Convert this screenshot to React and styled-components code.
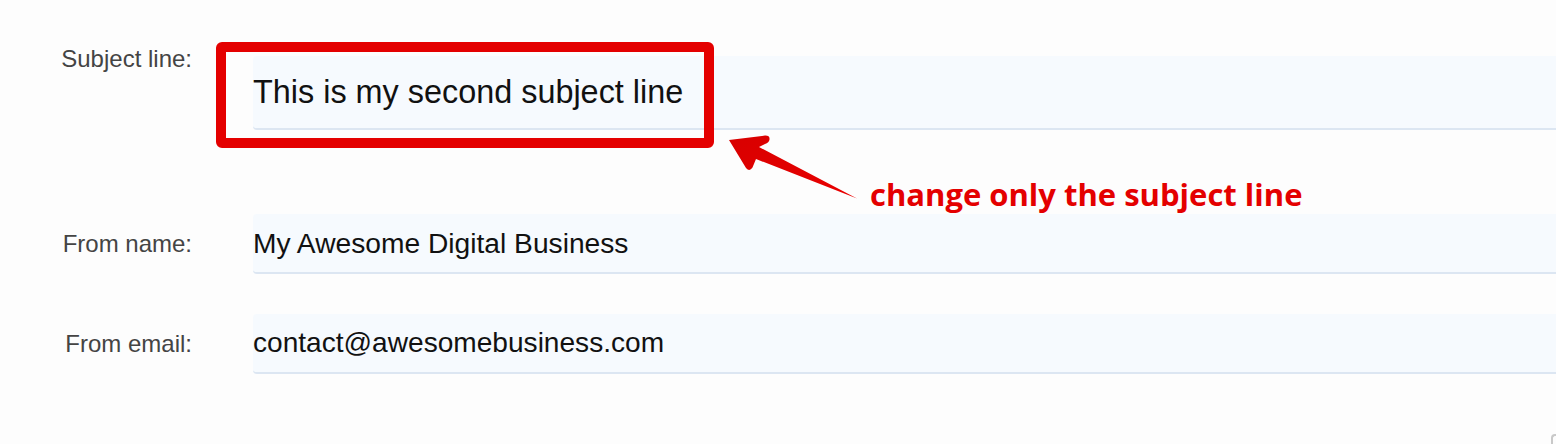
import React from 'react';
import styled, { createGlobalStyle } from 'styled-components';

const colors = {
  page: '#fdfdfd',
  label: '#444444',
  value: '#111111',
  fieldBg: '#f6fafe',
  fieldLine: '#dce6f2',
  red: '#e40000',
};

const GlobalStyle = createGlobalStyle`
  html, body {
    margin: 0;
    padding: 0;
    background: ${colors.page};
  }
  body {
    font-family: "Liberation Sans", Arial, Helvetica, sans-serif;
    overflow: hidden;
  }
`;

const Page = styled.div`
  position: relative;
  width: 1556px;
  height: 444px;
  padding-top: 45px;
  box-sizing: border-box;
  display: flex;
  flex-direction: column;
`;

const Row = styled.div`
  display: grid;
  grid-template-columns: 192px 1fr;
  column-gap: 61px;
  align-items: ${(p) => (p.$top ? 'start' : 'center')};
  margin-top: ${(p) => p.$gap || 0}px;
`;

const Label = styled.label`
  font-size: 24px;
  line-height: 28px;
  color: ${colors.label};
  text-align: right;
`;

const FieldWrap = styled.div`
  position: relative;
  margin-top: ${(p) => p.$offset || 0}px;
`;

const Field = styled.div`
  height: ${(p) => p.$height}px;
  display: flex;
  align-items: center;
  background: ${colors.fieldBg};
  border-bottom: 2px solid ${colors.fieldLine};
  border-radius: 4px 0 0 4px;
  font-size: ${(p) => p.$size}px;
  color: ${colors.value};
  white-space: nowrap;
`;

const Highlight = styled.div`
  position: absolute;
  left: -37px;
  top: -14px;
  width: 498px;
  height: 106px;
  box-sizing: border-box;
  border: 10px solid ${colors.red};
  border-radius: 6px;
  pointer-events: none;
`;

const Arrow = styled.svg`
  position: absolute;
  left: 720px;
  top: 130px;
`;

const Callout = styled.div`
  position: absolute;
  left: 870px;
  top: 176px;
  font-family: "Open Sans", "DejaVu Sans", sans-serif;
  font-weight: 700;
  font-size: 31px;
  line-height: 36px;
  color: ${colors.red};
  white-space: nowrap;
`;

const Footer = styled.div`
  margin-top: 60px;
  display: flex;
  justify-content: flex-end;
`;

const ResizeCorner = styled.span`
  width: 3px;
  height: 9px;
  border-top: 2px solid #c9c9c9;
  border-left: 2px solid #c9c9c9;
  border-top-left-radius: 4px;
`;

const fields = [
  { label: 'Subject line:', value: 'This is my second subject line', height: 72, size: 32.4, top: true, offset: 11, gap: 0, marked: true },
  { label: 'From name:', value: 'My Awesome Digital Business', height: 58, size: 28.2, gap: 84 },
  { label: 'From email:', value: 'contact@awesomebusiness.com', height: 58, size: 28.1, gap: 40 },
];

export default function App() {
  return (
    <>
      <GlobalStyle />
      <Page>
        {fields.map((f) => (
          <Row key={f.label} $top={f.top} $gap={f.gap}>
            <Label>{f.label}</Label>
            <FieldWrap $offset={f.offset}>
              <Field $height={f.height} $size={f.size}>{f.value}</Field>
              {f.marked && <Highlight />}
            </FieldWrap>
          </Row>
        ))}
        <Footer>
          <ResizeCorner />
        </Footer>

        <Arrow width="145" height="75" viewBox="720 130 145 75">
          <defs>
            <linearGradient id="arrowFill" x1="0" y1="0" x2="1" y2="1">
              <stop offset="0" stopColor="#d80000" />
              <stop offset="1" stopColor="#ea0000" />
            </linearGradient>
          </defs>
          <path
            d="M729 140 L765 135.5 Q770 135.3 769.5 139.5 Q769 142.5 765 144 L759 147 L857 198.5 L756 159 L752.5 167.5 Q749.5 172 746 168 Z"
            fill="url(#arrowFill)"
          />
        </Arrow>
        <Callout>change only the subject line</Callout>
      </Page>
    </>
  );
}
